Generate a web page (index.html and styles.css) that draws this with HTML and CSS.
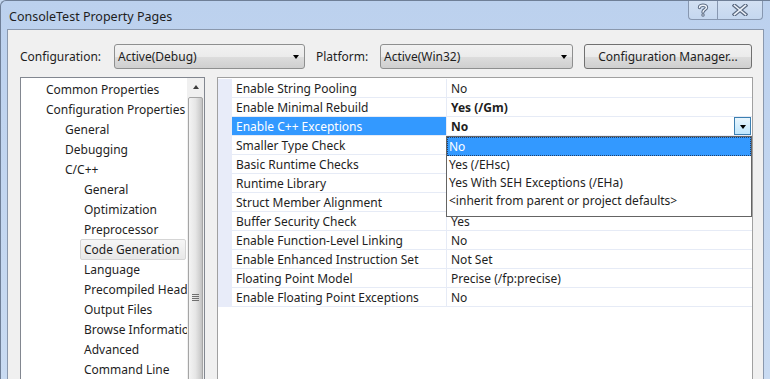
FILE: index.html
```html
<!DOCTYPE html>
<html lang="en">
<head>
  <meta charset="UTF-8">
  <title>ConsoleTest Property Pages</title>
  <link rel="stylesheet" href="styles.css">
</head>
<body>

<div class="window">
  <div class="titlebar">
    <div class="title">ConsoleTest Property Pages</div>
    <div class="caption-buttons">
      <div class="cap-btn help">
        <svg width="12" height="14" viewBox="0 0 12 14">
          <path d="M2.5 4.5 C2.5 1.5 9.5 1.5 9.5 4.5 C9.5 6.5 6 6.5 6 9" fill="none" stroke="#5c6b82" stroke-width="3.4" stroke-linecap="round"/>
          <path d="M2.5 4.5 C2.5 1.5 9.5 1.5 9.5 4.5 C9.5 6.5 6 6.5 6 9" fill="none" stroke="#eef3fa" stroke-width="1.4" stroke-linecap="round"/>
          <circle cx="6" cy="12" r="1.7" fill="#5c6b82"/>
          <circle cx="6" cy="12" r="0.7" fill="#eef3fa"/>
        </svg>
      </div>
      <div class="cap-btn close">
        <svg width="16" height="12" viewBox="0 0 16 12">
          <path d="M2.5 1.5 L13.5 10.5 M13.5 1.5 L2.5 10.5" stroke="#5c6b82" stroke-width="4" stroke-linecap="square"/>
          <path d="M2.5 1.5 L13.5 10.5 M13.5 1.5 L2.5 10.5" stroke="#eef3fa" stroke-width="1.6" stroke-linecap="square"/>
        </svg>
      </div>
    </div>
  </div>

  <div class="client">
    <div class="config-row">
      <div class="label label-config">Configuration:</div>
      <div class="combo combo-config">
        <span>Active(Debug)</span>
        <span class="arrow"></span>
      </div>
      <div class="label label-platform">Platform:</div>
      <div class="combo combo-platform">
        <span>Active(Win32)</span>
        <span class="arrow"></span>
      </div>
      <div class="button">Configuration Manager...</div>
    </div>

    <div class="panes">
      <div class="tree">
        <ul class="tree-items">
          <li class="lvl0">Common Properties</li>
          <li class="lvl0">Configuration Properties</li>
          <li class="lvl1">General</li>
          <li class="lvl1">Debugging</li>
          <li class="lvl1">C/C++</li>
          <li class="lvl2">General</li>
          <li class="lvl2">Optimization</li>
          <li class="lvl2">Preprocessor</li>
          <li class="lvl2 current"><span class="selected">Code Generation</span></li>
          <li class="lvl2">Language</li>
          <li class="lvl2">Precompiled Headers</li>
          <li class="lvl2">Output Files</li>
          <li class="lvl2">Browse Information</li>
          <li class="lvl2">Advanced</li>
          <li class="lvl2">Command Line</li>
        </ul>
        <div class="scrollbar">
          <div class="scroll-up"><span class="up-arrow"></span></div>
          <div class="thumb"><span class="grip"></span></div>
        </div>
      </div>

      <div class="grid">
        <div class="row"><div class="gutter"></div><div class="name">Enable String Pooling</div><div class="value">No</div></div>
        <div class="row"><div class="gutter"></div><div class="name">Enable Minimal Rebuild</div><div class="value bold">Yes (/Gm)</div></div>
        <div class="row active"><div class="gutter"></div><div class="name">Enable C++ Exceptions</div><div class="value bold">No<span class="drop-btn"><span class="arrow"></span></span></div></div>
        <div class="row"><div class="gutter"></div><div class="name">Smaller Type Check</div><div class="value"></div></div>
        <div class="row"><div class="gutter"></div><div class="name">Basic Runtime Checks</div><div class="value"></div></div>
        <div class="row"><div class="gutter"></div><div class="name">Runtime Library</div><div class="value"></div></div>
        <div class="row"><div class="gutter"></div><div class="name">Struct Member Alignment</div><div class="value"></div></div>
        <div class="row"><div class="gutter"></div><div class="name">Buffer Security Check</div><div class="value">Yes</div></div>
        <div class="row"><div class="gutter"></div><div class="name">Enable Function-Level Linking</div><div class="value">No</div></div>
        <div class="row"><div class="gutter"></div><div class="name">Enable Enhanced Instruction Set</div><div class="value">Not Set</div></div>
        <div class="row"><div class="gutter"></div><div class="name">Floating Point Model</div><div class="value">Precise (/fp:precise)</div></div>
        <div class="row"><div class="gutter"></div><div class="name">Enable Floating Point Exceptions</div><div class="value">No</div></div>

        <ul class="popup">
          <li class="picked">No</li>
          <li>Yes (/EHsc)</li>
          <li>Yes With SEH Exceptions (/EHa)</li>
          <li>&lt;inherit from parent or project defaults&gt;</li>
        </ul>
      </div>
    </div>
  </div>
</div>

</body>
</html>
```

FILE: styles.css
```css
/* window frame */
body {
  margin: 0;
  padding: 0;
  overflow: hidden;
  font-family: 'Noto Sans', 'Liberation Sans', sans-serif;
  font-size: 12px;
  color: #1e1e1e;
  background: #c4d7ef;
}
.window {
  width: 770px;
  height: 379px;
  box-sizing: border-box;
  padding: 0 6px 0 6px;
  background: linear-gradient(to bottom, #bcd1ee, #c9dbf2);
  border-left: 1px solid #6f7f97;
  border-top: 1px solid #6f7f97;
  border-top-left-radius: 6px;
  overflow: hidden;
  display: flex;
  flex-direction: column;
}
.titlebar {
  height: 28px;
  display: flex;
  align-items: flex-start;
  justify-content: space-between;
  flex-shrink: 0;
}
.title {
  padding: 7px 0 0 2px;
  font-size: 12.5px;
  color: #1e1e1e;
}
.caption-buttons {
  display: flex;
  margin-top: -1px;
  margin-right: 1px;
}
.cap-btn {
  height: 20px;
  box-sizing: border-box;
  border: 1px solid #8797b0;
  border-top: none;
  display: flex;
  align-items: center;
  justify-content: center;
  background: linear-gradient(to bottom, #d3e1f3, #c5d7ef);
}
.cap-btn.help {
  width: 29px;
  border-bottom-left-radius: 4px;
  border-right: none;
}
.cap-btn.close {
  width: 46px;
  border-bottom-right-radius: 4px;
}

/* client area */
.client {
  flex: 1;
  background: #f0f0f0;
  border: 1px solid #8a98ad;
  border-bottom: none;
  padding: 0 10px 0 12px;
  min-height: 0;
}
.config-row {
  display: flex;
  align-items: center;
  height: 25px;
  margin-top: 14px;
}
.label {
  flex-shrink: 0;
}
.label-config { width: 94px; }
.label-platform { width: 64px; margin-left: 11px; }
.combo {
  height: 25px;
  box-sizing: border-box;
  border: 1px solid #8e8f8f;
  border-radius: 3px;
  background: linear-gradient(to bottom, #f2f2f2 0%, #ebebeb 50%, #dddddd 51%, #cfcfcf 100%);
  display: flex;
  align-items: center;
  justify-content: space-between;
  padding: 0 5px 0 3px;
}
.combo-config { width: 191px; }
.combo-platform { width: 193px; }
.arrow {
  width: 0;
  height: 0;
  border-left: 3.5px solid transparent;
  border-right: 3.5px solid transparent;
  border-top: 4px solid #000;
  margin-top: 1px;
}
.button {
  width: 168px;
  height: 25px;
  box-sizing: border-box;
  margin-left: 11px;
  border: 1px solid #707070;
  border-radius: 3px;
  background: linear-gradient(to bottom, #f2f2f2 0%, #ebebeb 50%, #dddddd 51%, #cfcfcf 100%);
  display: flex;
  align-items: center;
  justify-content: center;
}

/* panes */
.panes {
  display: flex;
  margin-top: 8px;
  height: 320px;
}
.tree {
  width: 185px;
  box-sizing: border-box;
  border: 1px solid #828790;
  background: #fff;
  display: flex;
}
.tree-items {
  flex: 1;
  list-style: none;
  margin: 0;
  padding: 2px 0 0;
  overflow: hidden;
  white-space: nowrap;
}
.tree-items li {
  height: 20px;
  line-height: 20px;
}
.tree-items .lvl0 { padding-left: 25px; }
.tree-items .lvl1 { padding-left: 44px; }
.tree-items .lvl2 { padding-left: 63px; }
.tree-items .lvl2.current { padding-left: 59px; }
.tree-items .selected {
  display: inline-block;
  height: 19px;
  line-height: 19px;
  padding: 0 6px 0 3px;
  border: 1px solid #d5d5d5;
  border-radius: 2px;
  background: linear-gradient(to bottom, #f6f6f6, #e8e8e8);
  margin-top: -1px;
}
.scrollbar {
  width: 17px;
  flex-shrink: 0;
  background: #f0f0f0;
  display: flex;
  flex-direction: column;
  align-items: center;
}
.scroll-up {
  height: 17px;
  width: 17px;
  display: flex;
  align-items: center;
  justify-content: center;
}
.up-arrow {
  width: 0;
  height: 0;
  border-left: 3.5px solid transparent;
  border-right: 3.5px solid transparent;
  border-bottom: 4px solid #3c3c3c;
}
.thumb {
  flex: 1;
  width: 15px;
  margin-top: 2px;
  box-sizing: border-box;
  border: 1px solid #a5a5a5;
  border-radius: 2px;
  background: linear-gradient(to right, #f4f4f4 0%, #e6e6e6 50%, #d2d2d2 80%, #c2c2c2 100%);
  display: flex;
  justify-content: center;
  padding-top: 196px;
}
.grip {
  width: 7px;
  height: 7px;
  background: repeating-linear-gradient(to bottom, #707070 0, #707070 1px, transparent 1px, transparent 2px);
}

/* property grid */
.grid {
  position: relative;
  width: 536px;
  margin-left: 12px;
  box-sizing: border-box;
  border: 1px solid #a0a0a0;
  background: #fff;
  padding-top: 1px;
}
.row {
  display: flex;
  height: 19px;
  box-sizing: border-box;
}
.row .gutter {
  width: 14px;
  flex-shrink: 0;
  background: #e8ecf9;
}
.row .name {
  width: 215px;
  flex-shrink: 0;
  box-sizing: border-box;
  padding: 1px 0 0 4px;
  border-right: 1px solid #e6ebf6;
  border-bottom: 1px solid #e6ebf6;
  line-height: 18px;
  white-space: nowrap;
  overflow: hidden;
}
.row .value {
  flex: 1;
  padding: 1px 0 0 4px;
  border-bottom: 1px solid #e6ebf6;
  line-height: 18px;
  white-space: nowrap;
  display: flex;
  align-items: flex-start;
}
.row .bold {
  font-weight: bold;
}
.row.active .name {
  background: #3399ff;
  color: #fff;
}
.drop-btn {
  margin-left: auto;
  margin-right: 1px;
  margin-top: -1px;
  width: 17px;
  height: 18px;
  box-sizing: border-box;
  border: 1px solid #3c7fb1;
  background: linear-gradient(to bottom, #eaf6fd, #bee6fd);
  display: flex;
  align-items: center;
  justify-content: center;
}
.popup {
  position: absolute;
  left: 228px;
  top: 58px;
  width: 306px;
  height: 81px;
  box-sizing: border-box;
  margin: 0;
  padding: 0;
  list-style: none;
  background: #fff;
  border: 1px solid #646464;
}
.popup li {
  height: 18px;
  line-height: 18px;
  padding-left: 2px;
  white-space: nowrap;
}
.popup li.picked {
  height: 19px;
  box-sizing: border-box;
  background: #3399ff;
  color: #fff;
  border: 1px dotted #20406a;
  padding-left: 1px;
  line-height: 17px;
}
```
